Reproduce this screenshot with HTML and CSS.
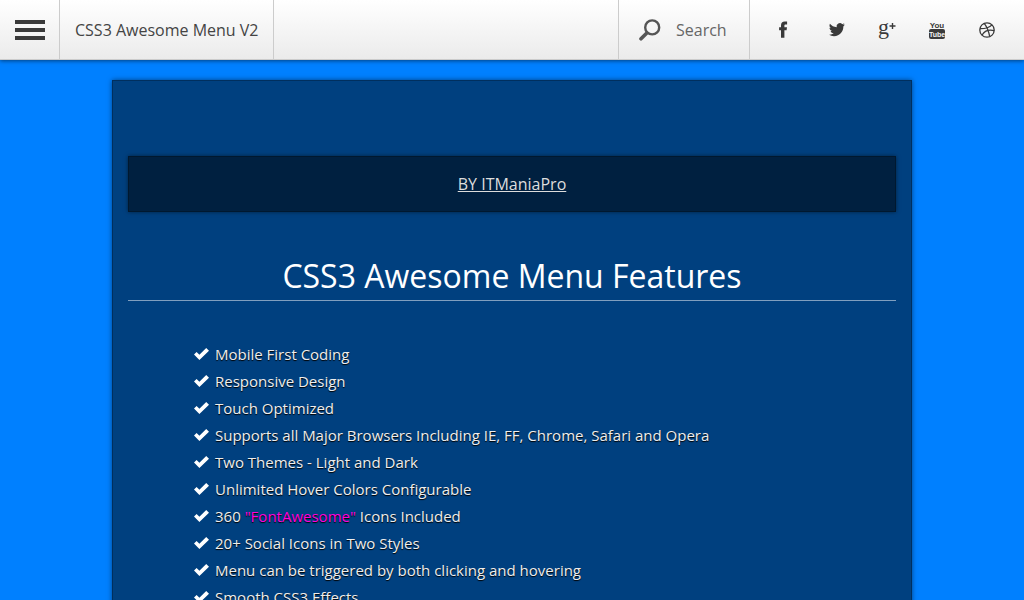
FILE: index.html
```
<!doctype html>
<html lang="en">
  <head>
    <meta charset="utf-8" />
    <title>CSS3 Awesome Menu V2</title>
    <meta name="viewport" content="width=device-width, initial-scale=1.0" />
    <link rel="stylesheet" href="styles.css">
  </head>
  <body>
    <header class="navbar">
      <button class="menu-toggle" type="button" aria-label="Menu">
        <span class="bar"></span>
        <span class="bar"></span>
        <span class="bar"></span>
      </button>
      <a class="brand" href="#">CSS3 Awesome Menu V2</a>

      <form class="search">
        <label for="search" aria-label="Search">
          <svg width="22" height="22" viewBox="0 0 22 22">
            <circle cx="13.2" cy="8.4" r="7" fill="none" stroke="#555" stroke-width="2.4" />
            <path d="M7.6 14.2L2 19.8" stroke="#555" stroke-width="3.6" stroke-linecap="round" />
          </svg>
        </label>
        <input id="search" type="text" placeholder="Search" />
      </form>

      <nav class="social">
        <a href="#" aria-label="Facebook">
          <svg width="18" height="18" viewBox="0 0 18 18">
            <path d="M7 16.8V9.2H5.1V6.3H7V4.6C7 1.8 8.3.5 10.8.5h2.3v3.1h-1.4c-1 0-1.3.4-1.3 1.2v1.5H13l-.4 2.9h-2.2v7.6z" />
          </svg>
        </a>
        <a href="#" aria-label="Twitter">
          <svg width="16" height="16" viewBox="0 0 24 24">
            <path d="M23.6 3.9c-.9.4-1.8.7-2.8.8 1-.6 1.8-1.6 2.2-2.7-1 .6-2 1-3.1 1.2a4.9 4.9 0 0 0-8.4 4.5C7.4 7.5 3.8 5.5 1.4 2.6c-1.3 2.2-.7 5.1 1.5 6.6-.8 0-1.6-.2-2.2-.6 0 2.3 1.6 4.400 3.900 4.900-.7.2-1.500.2-2.200.1.600 2 2.400 3.400 4.600 3.400A9.900 9.900 0 0 1 0 19c2.200 1.400 4.800 2.200 7.500 2.200 9.100 0 14.300-7.700 14-14.600 1-.7 1.800-1.600 2.100-2.700z" />
          </svg>
        </a>
        <a href="#" aria-label="Google+">
          <svg class="google" width="18" height="20" viewBox="0 0 18 20">
            <text x="0" y="14">g</text>
            <path d="M14.500 3V9M11.500 6H17.500" fill="none" stroke="#3a3a3a" stroke-width="1.400" />
          </svg>
        </a>
        <a href="#" aria-label="YouTube">
          <svg class="youtube" width="18" height="20" viewBox="0 0 18 20">
            <text x="9" y="8" text-anchor="middle">You</text>
            <rect x="1" y="9" width="16" height="10" rx="2" />
            <text class="tube" x="9" y="17" text-anchor="middle">Tube</text>
          </svg>
        </a>
        <a href="#" aria-label="Dribbble">
          <svg width="18" height="18" viewBox="0 0 18 18">
            <g fill="none" stroke="#3a3a3a" stroke-width="1.3">
              <circle cx="9" cy="9" r="7.2" />
              <path d="M6.2 2.3C9 5.8 10.6 9.5 11.7 15.6M1.9 7.7C7.5 7.8 11.3 6.7 14 3.9M4 14.2C6.3 10 10.5 8.3 16.2 9.6" />
            </g>
          </svg>
        </a>
      </nav>
    </header>

    <main class="container">
      <div class="author"><a href="#">BY ITManiaPro</a></div>

      <h1>CSS3 Awesome Menu Features</h1>

      <ul class="features">
        <li>Mobile First Coding</li>
        <li>Responsive Design</li>
        <li>Touch Optimized</li>
        <li>Supports all Major Browsers Including IE, FF, Chrome, Safari and Opera</li>
        <li>Two Themes - Light and Dark</li>
        <li>Unlimited Hover Colors Configurable</li>
        <li>360 <a href="#">"FontAwesome"</a> Icons Included</li>
        <li>20+ Social Icons in Two Styles</li>
        <li>Menu can be triggered by both clicking and hovering</li>
        <li>Smooth CSS3 Effects</li>
      </ul>
    </main>

    <script>
      // put the tick in front of every feature
      const tick =
        '<svg class="tick" width="15" height="12" viewBox="0 0 15 12"><path d="M0 6.6L2.6 4L5.4 6.7L12.2 0L15 2.7L5.4 12Z" /></svg>';
      document.querySelectorAll('.features li').forEach((li) => {
        li.insertAdjacentHTML('afterbegin', tick);
      });
    </script>
  </body>
</html>
```

FILE: styles.css
```
* {
  box-sizing: border-box;
}

html {
  scrollbar-width: none;
}

body {
  font-family: "Open Sans", sans-serif;
  font-size: 15px;
  margin: 0;
  background-color: #0080ff;
  color: white;
}

.navbar {
  display: flex;
  height: 60px;
  background: linear-gradient(#ffffff, #ebebeb);
  border-bottom: 1px solid #ccc;
  box-shadow: 0 1px 4px rgba(0, 0, 0, 0.5);
}

.menu-toggle {
  display: flex;
  flex-direction: column;
  justify-content: center;
  gap: 4px;
  width: 60px;
  padding: 0 14px 0 15px;
  border: none;
  border-right: 1px solid #ccc;
  background: none;
  cursor: pointer;
}

.bar {
  height: 4px;
  background-color: #3a3a3a;
}

.brand {
  padding: 0 15px;
  border-right: 1px solid #ccc;
  color: #444;
  font-size: 16px;
  line-height: 60px;
  text-decoration: none;
}

.search {
  display: flex;
  align-items: center;
  gap: 15px;
  width: 132px;
  margin-left: auto;
  padding-left: 20px;
  border-left: 1px solid #ccc;
  border-right: 1px solid #ccc;
}

.search label {
  display: flex;
}

.search input {
  width: 60px;
  padding: 0;
  border: none;
  outline: none;
  background: none;
  color: #444;
  font: 16px "Open Sans", sans-serif;
}

.search input::placeholder {
  color: #666;
}

.social {
  display: flex;
  padding: 0 12px;
}

.social a {
  display: flex;
  align-items: center;
  justify-content: center;
  width: 50px;
}

.social a:first-child {
  width: 42px;
  margin-right: 8px;
}

.social svg {
  fill: #3a3a3a;
}

.google {
  font: 22px "Liberation Serif", serif;
}

.youtube {
  font: bold 8px "Liberation Sans", sans-serif;
}

.youtube .tube {
  font-size: 7px;
  fill: #f4f4f4;
}

.container {
  max-width: 800px;
  margin: 20px auto;
  padding: 75px 15px 20px;
  border: 1px solid #002f5e;
  background-color: #00407f;
  box-shadow: 0 0 5px rgba(0, 0, 0, 0.5);
}

.author {
  padding: 15px;
  border: 1px solid #00182f;
  background-color: #002040;
  box-shadow: 0 0 4px rgba(0, 0, 0, 0.5);
  font-size: 16px;
  line-height: 24px;
  text-align: center;
}

.author a {
  color: #ddd;
}

h1 {
  margin: 40px 0;
  border-bottom: 1px solid #809fbf;
  font-size: 32px;
  font-weight: normal;
  line-height: 48px;
  text-align: center;
}

.features {
  margin: 0;
  padding: 0 66px;
  color: #eee;
  line-height: 27px;
  list-style: none;
  text-shadow: 0 1px 1px #000;
}

.features a {
  color: #f0d;
  text-decoration: none;
}

.tick {
  margin-right: 6px;
  fill: white;
}
```
